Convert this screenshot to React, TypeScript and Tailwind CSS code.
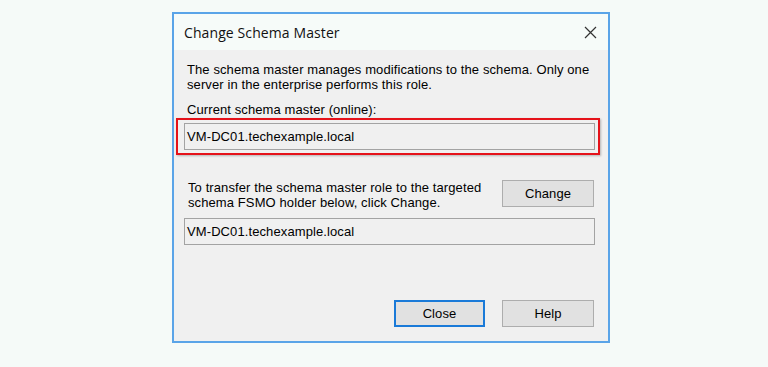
const body = { fontFamily: '"Liberation Sans", Arial, sans-serif' };
const title = { fontFamily: '"Segoe UI", "Open Sans", "Noto Sans", sans-serif' };

function TextBox({ value }: { value: string }) {
  return (
    <div className="h-[27px] w-full border border-[#a3a3a3] bg-[#f0f0f0] pl-[2px] flex items-center text-[13px] text-black leading-none tracking-[0.1px]">
      {value}
    </div>
  );
}

function Button({ label, focused }: { label: string; focused?: boolean }) {
  return (
    <button
      className={`w-full h-[27px] bg-[#e1e1e1] text-[13px] text-black flex items-center justify-center ${
        focused ? 'border-2 border-[#1a7ad8]' : 'border border-[#adadad]'
      }`}
      style={body}
    >
      {label}
    </button>
  );
}

export default function App() {
  return (
    <div className="w-[768px] h-[367px] bg-[#f5faf8] pt-[12px] pl-[172px]">
      <div className="w-[438px] h-[331px] border-2 border-[#5aa4e8] flex flex-col bg-[#f0f0f0]">
        <div className="h-[36px] bg-[#f6fbf9] flex items-center justify-between pl-[10px] pr-[11px]">
          <span className="text-[14px] tracking-[0.1px] text-[#111]" style={title}>Change Schema Master</span>
          <svg width="13" height="13" viewBox="0 0 13 13" className="text-[#333]">
            <path d="M1 1 L12 12 M12 1 L1 12" stroke="currentColor" strokeWidth="1.2" fill="none" />
          </svg>
        </div>

        <div className="flex-1 flex flex-col pl-[10px] pr-[13px] pt-[12px] pb-[14px] text-[13px] text-black tracking-[0.1px]" style={body}>
          <p className="pl-[3px] leading-[15px]">
            The schema master manages modifications to the schema. Only one
            <br />
            server in the enterprise performs this role.
          </p>
          <p className="pl-[3px] leading-[15px] mt-[10px]">Current schema master (online):</p>

          <div className="relative mt-[6px]">
            <TextBox value="VM-DC01.techexample.local" />
            <div className="absolute left-[-8px] top-[-5px] w-[424px] h-[37px] border-2 border-[#e5121a] shadow-[1px_1px_2px_rgba(0,0,0,0.25)] pointer-events-none" />
          </div>

          <div className="mt-[30px] flex items-start justify-between">
            <p className="pl-[4px] leading-[15px]">
              To transfer the schema master role to the targeted
              <br />
              schema FSMO holder below, click Change.
            </p>
            <div className="w-[92px] mr-[1px]">
              <Button label="Change" />
            </div>
          </div>

          <div className="mt-[8px]">
            <TextBox value="VM-DC01.techexample.local" />
          </div>

          <div className="mt-auto flex justify-end gap-[17px] pr-[1px]">
            <div className="w-[91px]">
              <Button label="Close" focused />
            </div>
            <div className="w-[92px]">
              <Button label="Help" />
            </div>
          </div>
        </div>
      </div>
    </div>
  );
}
